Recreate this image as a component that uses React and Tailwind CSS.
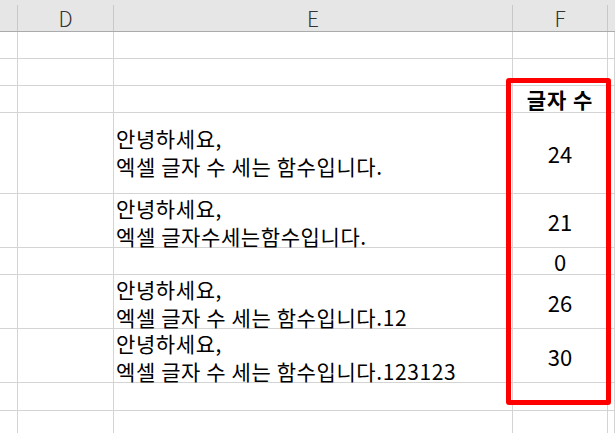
import React from 'react'

const font = { fontFamily: '"Noto Sans CJK KR", "Noto Sans", sans-serif' }

const rows = [
  { h: 'h-[27px]' },
  { h: 'h-[27px]' },
  { h: 'h-[27px]', f: '글자 수', head: true },
  { h: 'h-[81px]', e: ['안녕하세요,', '엑셀 글자 수 세는 함수입니다.'], f: '24', tall: true },
  { h: 'h-[54px]', e: ['안녕하세요,', '엑셀 글자수세는함수입니다.'], f: '21' },
  { h: 'h-[27px]', f: '0' },
  { h: 'h-[54px]', e: ['안녕하세요,', '엑셀 글자 수 세는 함수입니다.12'], f: '26' },
  { h: 'h-[54px]', e: ['안녕하세요,', '엑셀 글자 수 세는 함수입니다.123123'], f: '30' },
  { h: 'h-[28px]' },
  { h: 'h-[27px]' },
]

function Cell({ className = '', children }) {
  return <div className={`border-r border-b border-[#d4d4d4] ${className}`}>{children}</div>
}

export default function App() {
  return (
    <div className="relative w-[615px] h-[433px] overflow-hidden bg-white text-black" style={font}>
      {/* column headers */}
      <div className="flex h-[32px] bg-[#e6e6e6] border-b border-[#ababab] text-[21px] font-light text-[#333]">
        <div className="w-[18px] mt-[5px] border-r border-[#c8c8c8]" />
        <div className="w-[96px] mt-[5px] border-r border-[#c8c8c8] flex items-center justify-center leading-none">D</div>
        <div className="w-[399px] mt-[5px] border-r border-[#c8c8c8] flex items-center justify-center leading-none">E</div>
        <div className="w-[95px] mt-[5px] border-r border-[#c8c8c8] flex items-center justify-center leading-none">F</div>
        <div className="flex-1" />
      </div>

      {rows.map((r, i) => (
        <div key={i} className={`flex ${r.h}`}>
          <Cell className="w-[18px]" />
          <Cell className="w-[96px]" />
          <Cell
            className={`w-[399px] pl-[2px] flex flex-col text-[21px] tracking-[0.6px] leading-[28px] whitespace-nowrap ${
              r.tall ? 'justify-center pb-[3px]' : 'justify-start'
            }`}
          >
            {r.e && r.e.map((line, j) => <div key={j}>{line}</div>)}
          </Cell>
          <Cell
            className={`w-[95px] flex items-center justify-center leading-[20px] ${
              r.head ? 'font-bold text-[21px] tracking-[1px]' : 'text-[22px]'
            }`}
          >
            {r.f}
          </Cell>
          <Cell className="flex-1" />
        </div>
      ))}

      {/* highlight box */}
      <div className="absolute left-[506px] top-[78px] w-[105px] h-[327px] border-[5px] border-[#ff0000] rounded-[3px]" />
    </div>
  )
}
